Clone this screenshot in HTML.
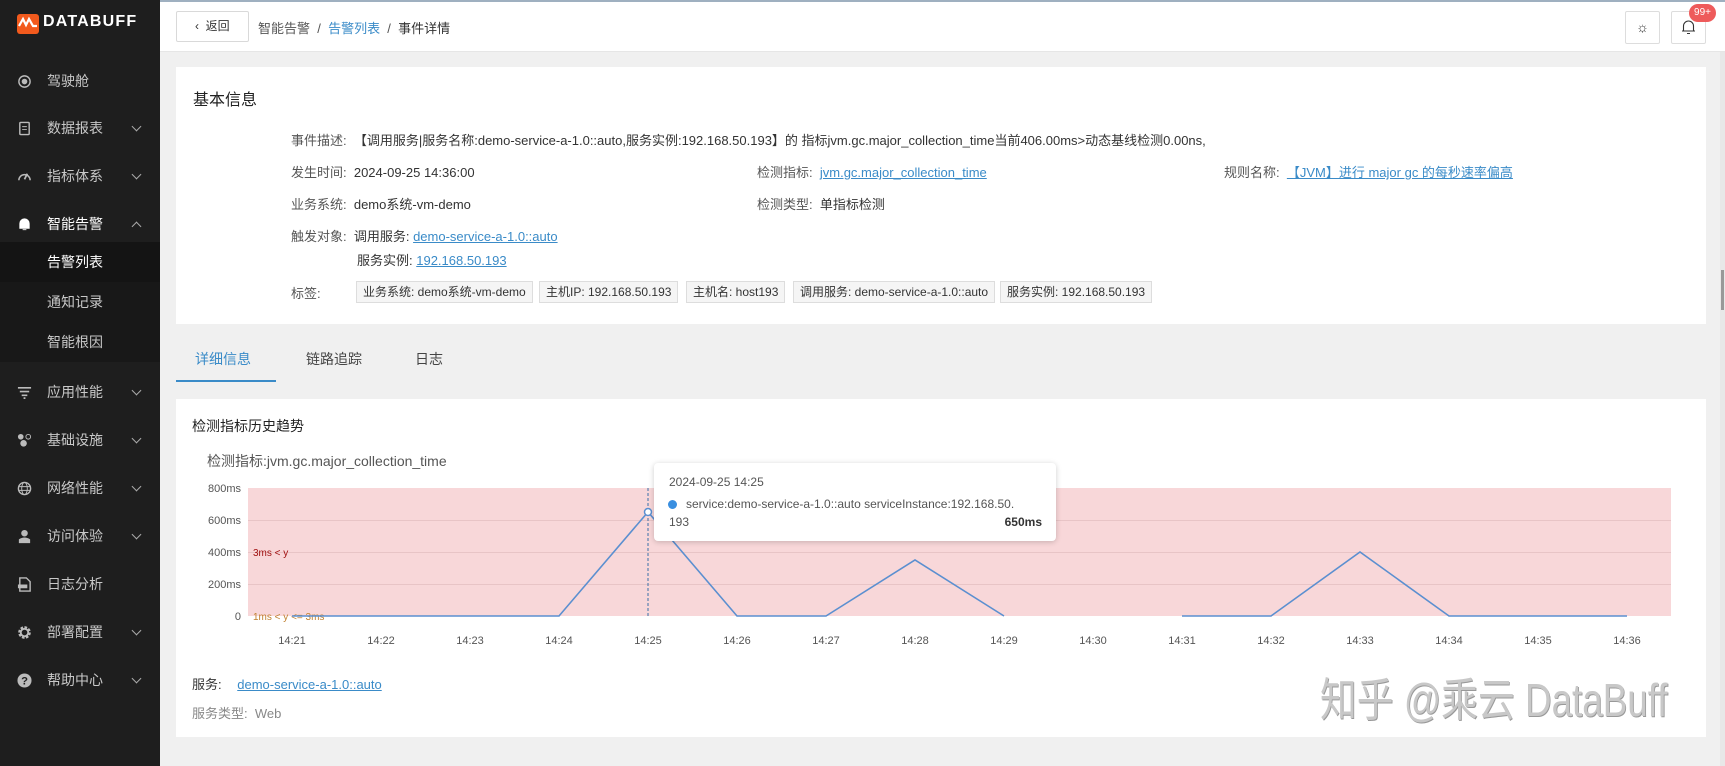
<!DOCTYPE html>
<html><head><meta charset="utf-8"><style>
*{margin:0;padding:0;box-sizing:border-box}
body{width:1725px;height:766px;overflow:hidden;background:#f0f0f0;font-family:"Liberation Sans","Noto Sans CJK SC",sans-serif;font-size:13px;color:#333;position:relative}
.a{position:absolute;white-space:nowrap}
#side{position:absolute;left:0;top:0;width:160px;height:766px;background:#1e1e1e;color:#c8c8c8;font-size:14px}
.mi{position:absolute;left:0;width:160px;height:40px;line-height:40px}
.mi .t{position:absolute;left:47px}
.mi .ic{position:absolute;left:17px;top:13px;width:15px;height:15px}
.mi .ch{position:absolute;left:133px;top:15px;width:7px;height:7px;border-right:1px solid #aaa;border-bottom:1px solid #aaa;transform:rotate(45deg)}
#hdr{position:absolute;left:160px;top:0;width:1565px;height:52px;background:#fff;border-top:2px solid #9fb0c0;border-bottom:1px solid #e6e6e6}
.card{position:absolute;background:#fff}
.lbl{color:#555}
a,.lk{color:#3a8bc8;text-decoration:underline}
.tag{position:absolute;top:281px;height:22px;line-height:20px;border:1px solid #ddd;background:#f5f5f5;padding:0 6px;font-size:12px;color:#333}
</style></head><body>
<div id="side">
 <div class="a" style="left:17px;top:14px;width:22px;height:20px;background:#f25a1d;border-radius:3px"></div>
 <svg class="a" style="left:18px;top:16px" width="20" height="14" viewBox="0 0 20 14"><path d="M1 10 L5 3 L8 9 L11 3 L15 10 L19 10" stroke="#fff" stroke-width="2.2" fill="none"/></svg>
 <div class="a" style="left:43px;top:13px;color:#fff;font-weight:bold;font-size:16px;letter-spacing:1.2px">DATABUFF</div>
 <div class="mi" style="top:61px"><svg class="ic" viewBox="0 0 16 16"><circle cx="8" cy="8" r="6" stroke="#bbb" stroke-width="1.5" fill="none"/><circle cx="8" cy="8" r="3" fill="#bbb"/></svg><span class="t">驾驶舱</span></div>
 <div class="mi" style="top:108px"><svg class="ic" viewBox="0 0 16 16"><rect x="3" y="1.5" width="10" height="13" rx="1" stroke="#bbb" stroke-width="1.5" fill="none"/><path d="M5.5 6h5M5.5 9h5" stroke="#bbb"/></svg><span class="t">数据报表</span><i class="ch"></i></div>
 <div class="mi" style="top:156px"><svg class="ic" viewBox="0 0 16 16"><path d="M2 12 A6 6 0 1 1 14 12" stroke="#bbb" stroke-width="1.6" fill="none"/><path d="M8 11 L11 5" stroke="#bbb" stroke-width="1.8"/></svg><span class="t">指标体系</span><i class="ch"></i></div>
 <div class="mi" style="top:204px;color:#fff"><svg class="ic" viewBox="0 0 16 16"><path d="M3 12 L3 7 A5 5 0 0 1 13 7 L13 12 Z M6 13.5 h4" fill="#fff" stroke="#fff"/></svg><span class="t">智能告警</span><i class="ch" style="transform:rotate(225deg);top:19px"></i></div>
 <div class="mi" style="top:242px;background:#141414;color:#fff"><span class="t">告警列表</span></div>
 <div class="mi" style="top:282px;background:#181818"><span class="t">通知记录</span></div>
 <div class="mi" style="top:322px;background:#181818"><span class="t">智能根因</span></div>
 <div class="mi" style="top:372px"><svg class="ic" viewBox="0 0 16 16"><path d="M1 3h14M3 7h10M5 11h6M7 14h2" stroke="#bbb" stroke-width="1.8"/></svg><span class="t">应用性能</span><i class="ch"></i></div>
 <div class="mi" style="top:420px"><svg class="ic" viewBox="0 0 16 16"><circle cx="4" cy="4" r="3" fill="#bbb"/><circle cx="12" cy="4" r="2.5" stroke="#bbb" fill="none"/><circle cx="7" cy="11" r="3.5" fill="#bbb"/></svg><span class="t">基础设施</span><i class="ch"></i></div>
 <div class="mi" style="top:468px"><svg class="ic" viewBox="0 0 16 16"><circle cx="8" cy="8" r="6.5" stroke="#bbb" stroke-width="1.5" fill="none"/><ellipse cx="8" cy="8" rx="3" ry="6.5" stroke="#bbb" fill="none"/><path d="M2 6h12M2 10h12" stroke="#bbb"/></svg><span class="t">网络性能</span><i class="ch"></i></div>
 <div class="mi" style="top:516px"><svg class="ic" viewBox="0 0 16 16"><circle cx="8" cy="4.5" r="3.5" fill="#bbb"/><path d="M2 15 L2 11 Q8 7 14 11 L14 15Z" fill="#bbb"/></svg><span class="t">访问体验</span><i class="ch"></i></div>
 <div class="mi" style="top:564px"><svg class="ic" viewBox="0 0 16 16"><path d="M3 1h7l4 4v10H3z" stroke="#bbb" stroke-width="1.5" fill="none"/><rect x="1" y="8" width="10" height="4" fill="#bbb"/></svg><span class="t">日志分析</span></div>
 <div class="mi" style="top:612px"><svg class="ic" viewBox="0 0 16 16"><circle cx="8" cy="8" r="5" fill="none" stroke="#bbb" stroke-width="3.5" stroke-dasharray="2.5 1.4"/><circle cx="8" cy="8" r="4" fill="none" stroke="#bbb" stroke-width="2"/></svg><span class="t">部署配置</span><i class="ch"></i></div>
 <div class="mi" style="top:660px"><svg class="ic" viewBox="0 0 16 16"><circle cx="8" cy="8" r="7.5" fill="#bbb"/><text x="8" y="12.5" font-size="12" font-weight="bold" text-anchor="middle" fill="#1e1e1e" font-family="Liberation Sans">?</text></svg><span class="t">帮助中心</span><i class="ch"></i></div>
</div>
<div id="hdr">
 <div class="a" style="left:16px;top:9px;width:73px;height:31px;border:1px solid #d9d9d9;border-radius:2px;line-height:29px;font-size:12px;padding-left:18px">‹&nbsp;&nbsp;返回</div>
 <div class="a" style="left:98px;top:16px;font-size:13px;color:#555">智能告警 &nbsp;/&nbsp; <span style="color:#3a8bc8">告警列表</span> &nbsp;/&nbsp; <span style="color:#333">事件详情</span></div>
 <div class="a" style="left:1465px;top:9px;width:35px;height:33px;border:1px solid #ddd;border-radius:2px;text-align:center;line-height:31px;font-size:14px">☼</div>
 <div class="a" style="left:1511px;top:9px;width:35px;height:33px;border:1px solid #ddd;border-radius:2px"></div>
 <svg class="a" style="left:1521px;top:17px" width="15" height="16" viewBox="0 0 15 16"><path d="M2.5 12 V7 A5 5 0 0 1 12.5 7 V12 Z M1 12h13 M6 14.5h3" stroke="#333" stroke-width="1.1" fill="none"/></svg>
 <div class="a" style="left:1529px;top:2px;width:27px;height:18px;background:#ee5b5b;border-radius:9px;color:#fff;font-size:10px;line-height:18px;text-align:center">99+</div>
</div>
<div class="a" style="left:1720px;top:52px;width:5px;height:714px;background:#e8e8e8"></div>
<div class="a" style="left:1721px;top:270px;width:3px;height:40px;background:#999"></div>

<div class="card" style="left:176px;top:67px;width:1530px;height:257px">
 <div class="a" style="left:17px;top:19px;font-size:16px;color:#222">基本信息</div>
 <div class="a" style="left:115px;top:63px"><span class="lbl">事件描述: </span>&nbsp;【调用服务|服务名称:demo-service-a-1.0::auto,服务实例:192.168.50.193】的 指标jvm.gc.major_collection_time当前406.00ms&gt;动态基线检测0.00ns,</div>
 <div class="a" style="left:115px;top:95px"><span class="lbl">发生时间: </span>&nbsp;2024-09-25 14:36:00</div>
 <div class="a" style="left:115px;top:127px"><span class="lbl">业务系统: </span>&nbsp;demo系统-vm-demo</div>
 <div class="a" style="left:115px;top:159px"><span class="lbl">触发对象: </span>&nbsp;调用服务: <span class="lk">demo-service-a-1.0::auto</span></div>
 <div class="a" style="left:181px;top:183px">服务实例: <span class="lk">192.168.50.193</span></div>
 <div class="a" style="left:115px;top:216px"><span class="lbl">标签:</span></div>
 <div class="a" style="left:581px;top:95px"><span class="lbl">检测指标: </span>&nbsp;<span class="lk">jvm.gc.major_collection_time</span></div>
 <div class="a" style="left:581px;top:127px"><span class="lbl">检测类型: </span>&nbsp;单指标检测</div>
 <div class="a" style="left:1048px;top:95px"><span class="lbl">规则名称: </span>&nbsp;<span class="lk">【JVM】进行 major gc 的每秒速率偏高</span></div>
</div>
<div class="tag" style="left:356px">业务系统: demo系统-vm-demo</div>
<div class="tag" style="left:539px">主机IP: 192.168.50.193</div>
<div class="tag" style="left:686px">主机名: host193</div>
<div class="tag" style="left:793px">调用服务: demo-service-a-1.0::auto</div>
<div class="tag" style="left:1000px">服务实例: 192.168.50.193</div>

<div class="a" style="left:195px;top:349px;font-size:14px;color:#3a8bc8">详细信息</div>
<div class="a" style="left:306px;top:349px;font-size:14px;color:#444">链路追踪</div>
<div class="a" style="left:415px;top:349px;font-size:14px;color:#444">日志</div>
<div class="a" style="left:176px;top:380px;width:100px;height:2px;background:#3a8bc8"></div>

<div class="card" style="left:176px;top:399px;width:1530px;height:338px"></div>
<div class="a" style="left:192px;top:416px;font-size:14px;color:#222">检测指标历史趋势</div>
<div class="a" style="left:207px;top:451px;font-size:14px;color:#555">检测指标:jvm.gc.major_collection_time</div>
<svg class="a" style="left:176px;top:470px" width="1530" height="190">
 <g font-family="Liberation Sans" font-size="11" fill="#555" text-anchor="end">
  <rect x="72" y="18" width="1423" height="128" fill="#f8d7d9"/>
  <g stroke="#e8c4c6" stroke-width="1"><line x1="72" x2="1495" y1="50.5" y2="50.5"/><line x1="72" x2="1495" y1="82.5" y2="82.5"/><line x1="72" x2="1495" y1="114.5" y2="114.5"/></g>
  <text x="65" y="22">800ms</text><text x="65" y="54">600ms</text><text x="65" y="86">400ms</text><text x="65" y="118">200ms</text><text x="65" y="150">0</text>
  <text x="77" y="86" text-anchor="start" fill="#a01010" font-size="10">3ms &lt; y</text>
  <text x="77" y="150" text-anchor="start" fill="#c08030" font-size="10">1ms &lt; y &lt;= 3ms</text>
  <g text-anchor="middle">
  <text x="116" y="174">14:21</text><text x="205" y="174">14:22</text><text x="294" y="174">14:23</text><text x="383" y="174">14:24</text><text x="472" y="174">14:25</text><text x="561" y="174">14:26</text><text x="650" y="174">14:27</text><text x="739" y="174">14:28</text><text x="828" y="174">14:29</text><text x="917" y="174">14:30</text><text x="1006" y="174">14:31</text><text x="1095" y="174">14:32</text><text x="1184" y="174">14:33</text><text x="1273" y="174">14:34</text><text x="1362" y="174">14:35</text><text x="1451" y="174">14:36</text></g>
  <line x1="472" x2="472" y1="18" y2="146" stroke="#3a6fa8" stroke-dasharray="3 2"/>
  <polyline points="116,146 383,146 472,42 561,146 650,146 739,90 828,146" stroke="#5b8fd0" stroke-width="1.6" fill="none"/>
  <polyline points="1006,146 1095,146 1184,82 1273,146 1451,146" stroke="#5b8fd0" stroke-width="1.6" fill="none"/>
  <circle cx="472" cy="42" r="3.5" fill="#fff" stroke="#5b8fd0" stroke-width="1.5"/>
 </g>
</svg>
<div class="a" style="left:654px;top:463px;width:402px;height:78px;background:#fff;border-radius:4px;box-shadow:0 1px 6px rgba(0,0,0,.2);font-size:12px;color:#555">
 <div class="a" style="left:15px;top:12px">2024-09-25 14:25</div>
 <div class="a" style="left:14px;top:37px;width:9px;height:9px;border-radius:5px;background:#3a8fe0"></div>
 <div class="a" style="left:32px;top:34px">service:demo-service-a-1.0::auto serviceInstance:192.168.50.</div>
 <div class="a" style="left:15px;top:52px">193</div>
 <div class="a" style="right:14px;top:52px;font-weight:bold;color:#333">650ms</div>
</div>
<div class="a" style="left:192px;top:674px;color:#333">服务: <span class="lk" style="margin-left:12px">demo-service-a-1.0::auto</span></div>
<div class="a" style="left:192px;top:703px;color:#888">服务类型:&nbsp; Web</div>
<div class="a" style="left:1320px;top:664px;font-size:46px;color:#c8c8c8;text-shadow:1px 1px 0 #999;transform:scaleX(0.8);transform-origin:left top">知乎 @乘云 DataBuff</div>
</body></html>
